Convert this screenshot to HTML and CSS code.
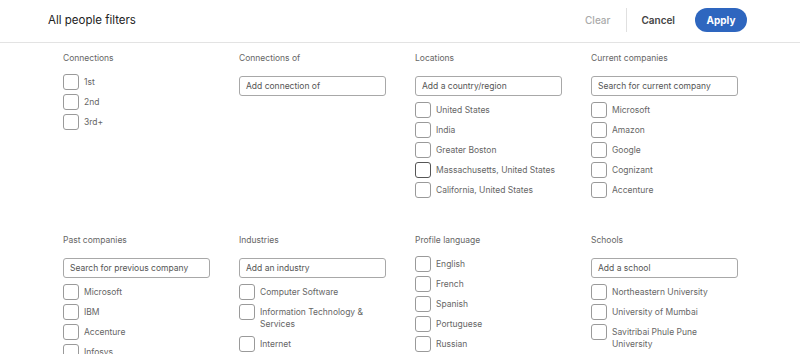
FILE: index.html
```html
<!DOCTYPE html>
<html>
<head>
<meta charset="utf-8">
<link rel="stylesheet" href="styles.css">
</head>
<body>
<header class="bar">
  <h1 class="title">All people filters</h1>
  <div class="actions">
    <button class="btn clear">Clear</button>
    <span class="divider"></span>
    <button class="btn cancel">Cancel</button>
    <button class="btn apply">Apply</button>
  </div>
</header>
<main class="grid">
  <section class="sec">
    <h2 class="sec-title">Connections</h2>
    <ul class="list">
      <li class="item"><span class="box"></span><span class="lbl">1st</span></li>
      <li class="item"><span class="box"></span><span class="lbl">2nd</span></li>
      <li class="item"><span class="box"></span><span class="lbl">3rd+</span></li>
    </ul>
  </section>
  <section class="sec">
    <h2 class="sec-title">Connections of</h2>
    <div class="field">Add connection of</div>
  </section>
  <section class="sec">
    <h2 class="sec-title">Locations</h2>
    <div class="field">Add a country/region</div>
    <ul class="list">
      <li class="item"><span class="box"></span><span class="lbl">United States</span></li>
      <li class="item"><span class="box"></span><span class="lbl">India</span></li>
      <li class="item"><span class="box"></span><span class="lbl">Greater Boston</span></li>
      <li class="item"><span class="box hover"></span><span class="lbl">Massachusetts, United States</span></li>
      <li class="item"><span class="box"></span><span class="lbl">California, United States</span></li>
    </ul>
  </section>
  <section class="sec">
    <h2 class="sec-title">Current companies</h2>
    <div class="field">Search for current company</div>
    <ul class="list">
      <li class="item"><span class="box"></span><span class="lbl">Microsoft</span></li>
      <li class="item"><span class="box"></span><span class="lbl">Amazon</span></li>
      <li class="item"><span class="box"></span><span class="lbl">Google</span></li>
      <li class="item"><span class="box"></span><span class="lbl">Cognizant</span></li>
      <li class="item"><span class="box"></span><span class="lbl">Accenture</span></li>
    </ul>
  </section>
  <section class="sec">
    <h2 class="sec-title">Past companies</h2>
    <div class="field">Search for previous company</div>
    <ul class="list">
      <li class="item"><span class="box"></span><span class="lbl">Microsoft</span></li>
      <li class="item"><span class="box"></span><span class="lbl">IBM</span></li>
      <li class="item"><span class="box"></span><span class="lbl">Accenture</span></li>
      <li class="item"><span class="box"></span><span class="lbl">Infosys</span></li>
    </ul>
  </section>
  <section class="sec">
    <h2 class="sec-title">Industries</h2>
    <div class="field">Add an industry</div>
    <ul class="list">
      <li class="item"><span class="box"></span><span class="lbl">Computer Software</span></li>
      <li class="item"><span class="box"></span><span class="lbl">Information Technology &amp; Services</span></li>
      <li class="item"><span class="box"></span><span class="lbl">Internet</span></li>
    </ul>
  </section>
  <section class="sec">
    <h2 class="sec-title">Profile language</h2>
    <ul class="list">
      <li class="item"><span class="box"></span><span class="lbl">English</span></li>
      <li class="item"><span class="box"></span><span class="lbl">French</span></li>
      <li class="item"><span class="box"></span><span class="lbl">Spanish</span></li>
      <li class="item"><span class="box"></span><span class="lbl">Portuguese</span></li>
      <li class="item"><span class="box"></span><span class="lbl">Russian</span></li>
    </ul>
  </section>
  <section class="sec">
    <h2 class="sec-title">Schools</h2>
    <div class="field">Add a school</div>
    <ul class="list">
      <li class="item"><span class="box"></span><span class="lbl">Northeastern University</span></li>
      <li class="item"><span class="box"></span><span class="lbl">University of Mumbai</span></li>
      <li class="item"><span class="box"></span><span class="lbl">Savitribai Phule Pune University</span></li>
    </ul>
  </section>
</main>
</body>
</html>
```
FILE: styles.css
```css
* { box-sizing: border-box; }
html, body { margin: 0; padding: 0; }
body {
  width: 800px;
  height: 354px;
  overflow: hidden;
  background: #fff;
  font-family: Inter, "Liberation Sans", sans-serif;
  color: #666;
}
.bar {
  height: 43px;
  padding: 0 53px 2px 48px;
  border-bottom: 1px solid #e3e3e3;
  display: flex;
  align-items: center;
  justify-content: space-between;
}
.title {
  margin: 0;
  font-size: 11.5px;
  font-weight: 400;
  color: #222;
}
.actions {
  display: flex;
  align-items: center;
}
.btn {
  border: 0;
  background: none;
  font-family: inherit;
  font-size: 10px;
  padding: 0;
  cursor: pointer;
}
.clear { color: #aaa; font-weight: 500; }
.divider {
  width: 1px;
  height: 24px;
  background: #e0e0e0;
  margin: 0 14px 0 16px;
}
.cancel { color: #444; font-weight: 600; margin-right: 20px; }
.apply {
  width: 52px;
  height: 24px;
  border-radius: 12px;
  background: #2e66bf;
  color: #fff;
  font-weight: 700;
}
.grid {
  display: grid;
  grid-template-columns: repeat(4, 176px);
  align-items: start;
  row-gap: 36px;
  padding: 9px 0 0 63px;
}
.sec {
  width: 147px;
  display: flex;
  flex-direction: column;
}
.sec-title {
  margin: 0 0 10px;
  font-size: 8.5px;
  line-height: 12px;
  font-weight: 400;
  color: #666;
}
.field {
  margin: 2px 0 6px;
  height: 20px;
  border: 1px solid #a8a8a8;
  border-radius: 3px;
  padding: 0 6px;
  font-size: 8.5px;
  line-height: 18px;
  color: #555;
}
.list {
  list-style: none;
  margin: 0;
  padding: 0;
  display: flex;
  flex-direction: column;
  gap: 4px;
}
.item {
  display: flex;
  align-items: flex-start;
  gap: 5px;
}
.box {
  flex: 0 0 16px;
  width: 16px;
  height: 16px;
  border: 1px solid #9a9a9a;
  border-radius: 3px;
}
.box.hover { border-color: #555; }
.lbl {
  flex: 1;
  font-size: 8.5px;
  line-height: 12px;
  padding: 2px 0;
  color: #666;
}
```
